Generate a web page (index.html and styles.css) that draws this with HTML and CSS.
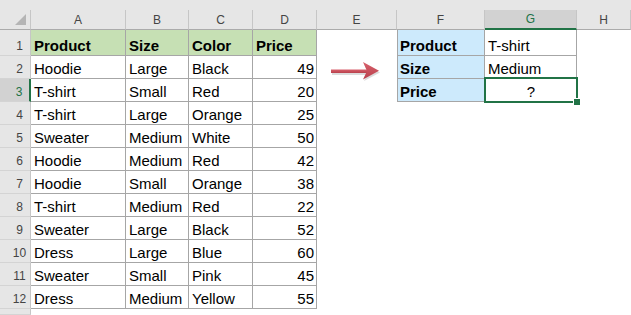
FILE: index.html
```html
<!DOCTYPE html>
<html>
<head>
<meta charset="utf-8">
<link rel="stylesheet" href="styles.css">
</head>
<body>
<div class="page">
  <div class="band"></div>
  <div class="sheet">
    <div class="corner"><svg width="12" height="12" viewBox="0 0 12 12"><polygon points="11,0 11,11 0,11" fill="#b5b5b5"/></svg></div>
    <div class="ch">A</div><div class="ch">B</div><div class="ch">C</div><div class="ch">D</div><div class="ch">E</div><div class="ch">F</div><div class="ch sel">G</div><div class="ch">H</div>

    <div class="rh">1</div>
    <div class="c hdr">Product</div><div class="c hdr">Size</div><div class="c hdr">Color</div><div class="c hdr">Price</div>
    <div class="blank"></div><div class="c lbl">Product</div><div class="c">T-shirt</div><div class="blank"></div>

    <div class="rh">2</div>
    <div class="c">Hoodie</div><div class="c">Large</div><div class="c">Black</div><div class="c num">49</div>
    <div class="blank"></div><div class="c lbl">Size</div><div class="c">Medium</div><div class="blank"></div>

    <div class="rh rsel">3</div>
    <div class="c">T-shirt</div><div class="c">Small</div><div class="c">Red</div><div class="c num">20</div>
    <div class="blank"></div><div class="c lbl">Price</div><div class="c mid active">?</div><div class="blank"></div>

    <div class="rh">4</div>
    <div class="c">T-shirt</div><div class="c">Large</div><div class="c">Orange</div><div class="c num">25</div>
    <div class="blank"></div><div class="blank"></div><div class="blank"></div><div class="blank"></div>

    <div class="rh">5</div>
    <div class="c">Sweater</div><div class="c">Medium</div><div class="c">White</div><div class="c num">50</div>
    <div class="blank"></div><div class="blank"></div><div class="blank"></div><div class="blank"></div>

    <div class="rh">6</div>
    <div class="c">Hoodie</div><div class="c">Medium</div><div class="c">Red</div><div class="c num">42</div>
    <div class="blank"></div><div class="blank"></div><div class="blank"></div><div class="blank"></div>

    <div class="rh">7</div>
    <div class="c">Hoodie</div><div class="c">Small</div><div class="c">Orange</div><div class="c num">38</div>
    <div class="blank"></div><div class="blank"></div><div class="blank"></div><div class="blank"></div>

    <div class="rh">8</div>
    <div class="c">T-shirt</div><div class="c">Medium</div><div class="c">Red</div><div class="c num">22</div>
    <div class="blank"></div><div class="blank"></div><div class="blank"></div><div class="blank"></div>

    <div class="rh">9</div>
    <div class="c">Sweater</div><div class="c">Large</div><div class="c">Black</div><div class="c num">52</div>
    <div class="blank"></div><div class="blank"></div><div class="blank"></div><div class="blank"></div>

    <div class="rh">10</div>
    <div class="c">Dress</div><div class="c">Large</div><div class="c">Blue</div><div class="c num">60</div>
    <div class="blank"></div><div class="blank"></div><div class="blank"></div><div class="blank"></div>

    <div class="rh">11</div>
    <div class="c">Sweater</div><div class="c">Small</div><div class="c">Pink</div><div class="c num">45</div>
    <div class="blank"></div><div class="blank"></div><div class="blank"></div><div class="blank"></div>

    <div class="rh">12</div>
    <div class="c">Dress</div><div class="c">Medium</div><div class="c">Yellow</div><div class="c num">55</div>
    <div class="blank"></div><div class="blank"></div><div class="blank"></div><div class="blank"></div>

    <div class="rh"></div>
    <div class="blank"></div><div class="blank"></div><div class="blank"></div><div class="blank"></div>
    <div class="blank"></div><div class="blank"></div><div class="blank"></div><div class="blank"></div>

    <svg class="arrow" width="54" height="24" viewBox="0 0 54 24">
      <defs>
        <linearGradient id="ag" x1="0" y1="0" x2="0" y2="1">
          <stop offset="0" stop-color="#d8606b"/>
          <stop offset="1" stop-color="#b8404c"/>
        </linearGradient>
      </defs>
      <g transform="translate(0,1)" opacity="0.25" fill="#777">
        <rect x="3" y="9.5" width="36" height="3.5"/>
        <polygon points="35,2 51,10.5 35,19 39,10.5"/>
      </g>
      <rect x="2" y="8.5" width="36" height="3.5" fill="url(#ag)"/>
      <polygon points="34,1 50,9.8 34,18.5 38,10" fill="url(#ag)"/>
    </svg>
  </div>
</div>
</body>
</html>
```

FILE: styles.css
```css
html, body {
  margin: 0;
  padding: 0;
  background: #ffffff;
}

.page {
  width: 631px;
  height: 315px;
  overflow: hidden;
  font-family: "Liberation Sans", Arial, sans-serif;
}

.band {
  height: 10px;
  background: #e6e6e6;
}

.sheet {
  position: relative;
  display: grid;
  grid-template-columns: 31px 95px 63px 64px 64px 80px 88px 92px 54px;
  grid-template-rows: 20px 26px repeat(11, 23px) 6px;
}

.sheet > div {
  box-sizing: border-box;
  min-width: 0;
}

.corner {
  background: #e6e6e6;
  border-right: 1px solid #c6c6c6;
  border-bottom: 1px solid #ababab;
  display: flex;
  align-items: flex-end;
  justify-content: flex-end;
  padding: 0 3px 3px 0;
}

.ch {
  background: #e6e6e6;
  border-right: 1px solid #c6c6c6;
  border-bottom: 1px solid #ababab;
  color: #444444;
  font-size: 12px;
  display: flex;
  align-items: center;
  justify-content: center;
}

.ch.sel {
  background: #d2d2d2;
  color: #217346;
  border-bottom: 2px solid #217346;
}

.rh {
  background: #e6e6e6;
  border-right: 1px solid #c6c6c6;
  border-bottom: 1px solid #d4d4d4;
  color: #444444;
  font-size: 12px;
  line-height: 18px;
  display: flex;
  align-items: flex-end;
  justify-content: center;
  padding-left: 9px;
}

.rh.rsel {
  background: #d2d2d2;
  color: #217346;
  border-right: 2px solid #217346;
}

.c {
  border-right: 1px solid #a6a6a6;
  border-bottom: 1px solid #a6a6a6;
  font-size: 15px;
  line-height: 18px;
  color: #000000;
  padding: 0 2px 0 3px;
  display: flex;
  align-items: flex-end;
  white-space: nowrap;
}

.num {
  justify-content: flex-end;
}

.mid {
  justify-content: center;
}

.hdr {
  background: #c6e0b4;
  font-weight: bold;
}

.lbl {
  background: #cdeafc;
  font-weight: bold;
  border-left: 1px solid #a6a6a6;
  padding-left: 2px;
}

.blank {
  background: #ffffff;
}

.active {
  position: relative;
}

.active::after {
  content: "";
  position: absolute;
  top: -2px;
  left: -1px;
  right: -2px;
  bottom: -2px;
  border: 2px solid #217346;
}

.active::before {
  content: "";
  position: absolute;
  right: -5px;
  bottom: -5px;
  width: 6px;
  height: 6px;
  background: #217346;
  border: 1px solid #ffffff;
  z-index: 2;
}

.arrow {
  position: absolute;
  left: 329px;
  top: 51px;
}
```
